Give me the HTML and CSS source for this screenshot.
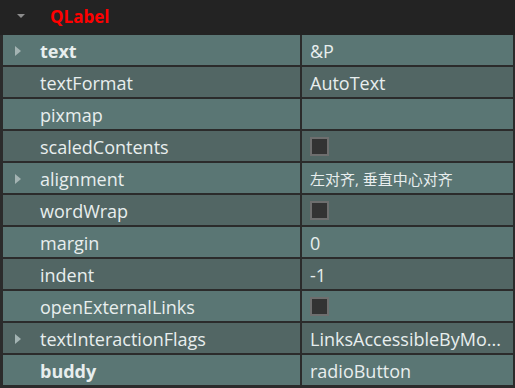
FILE: index.html
```html
<!DOCTYPE html>
<html>
<head>
<meta charset="utf-8">
<link rel="stylesheet" href="styles.css">
</head>
<body>
<div class="panel">
  <div class="header">
    <span class="tri-down"></span>
    <span class="title">QLabel</span>
  </div>
  <div class="rows">
    <div class="row light">
      <div class="name"><span class="arrow"></span><span class="bold">text</span></div>
      <div class="value">&amp;P</div>
    </div>
    <div class="row dark">
      <div class="name"><span class="noarrow"></span>textFormat</div>
      <div class="value">AutoText</div>
    </div>
    <div class="row light">
      <div class="name"><span class="noarrow"></span>pixmap</div>
      <div class="value"></div>
    </div>
    <div class="row dark">
      <div class="name"><span class="noarrow"></span>scaledContents</div>
      <div class="value"><span class="check"></span></div>
    </div>
    <div class="row light">
      <div class="name"><span class="arrow"></span>alignment</div>
      <div class="value cjk">左对齐, 垂直中心对齐</div>
    </div>
    <div class="row dark">
      <div class="name"><span class="noarrow"></span>wordWrap</div>
      <div class="value"><span class="check"></span></div>
    </div>
    <div class="row light">
      <div class="name"><span class="noarrow"></span>margin</div>
      <div class="value">0</div>
    </div>
    <div class="row dark">
      <div class="name"><span class="noarrow"></span>indent</div>
      <div class="value">-1</div>
    </div>
    <div class="row light">
      <div class="name"><span class="noarrow"></span>openExternalLinks</div>
      <div class="value"><span class="check"></span></div>
    </div>
    <div class="row dark">
      <div class="name"><span class="arrow"></span>textInteractionFlags</div>
      <div class="value">LinksAccessibleByMo...</div>
    </div>
    <div class="row light">
      <div class="name"><span class="noarrow"></span><span class="bold">buddy</span></div>
      <div class="value">radioButton</div>
    </div>
  </div>
</div>
</body>
</html>
```
FILE: styles.css
```css
html, body {
  margin: 0;
  padding: 0;
  background: #2b2b2b;
}
body {
  width: 515px;
  height: 388px;
  overflow: hidden;
  font-family: "Open Sans", "Noto Sans CJK SC", sans-serif;
  font-size: 18px;
  color: #e8eeee;
}
.panel {
  display: flex;
  flex-direction: column;
}
.header {
  height: 35px;
  background: #232323;
  display: flex;
  align-items: center;
}
.tri-down {
  width: 0;
  height: 0;
  margin-left: 17px;
  border-left: 4px solid transparent;
  border-right: 4px solid transparent;
  border-top: 4px solid #8c8c8c;
  margin-top: -3px;
}
.title {
  margin-left: 25px;
  color: #ff0000;
  font-weight: bold;
  font-size: 17px;
  margin-top: -3px;
}
.rows {
  display: flex;
  flex-direction: column;
  gap: 2px;
  padding: 0 2px 0 3px;
}
.row {
  height: 30px;
  display: grid;
  grid-template-columns: 297px 1fr;
  column-gap: 2px;
}
.row.light .name, .row.light .value { background: #5a7674; }
.row.dark .name, .row.dark .value { background: #526664; }
.name, .value {
  display: flex;
  align-items: center;
  white-space: nowrap;
  overflow: hidden;
  padding-top: 1px;
}
.name { padding-left: 12px; }
.value { padding-left: 8px; }
.value.cjk { font-size: 15px; }
.arrow {
  width: 0;
  height: 0;
  border-top: 5px solid transparent;
  border-bottom: 5px solid transparent;
  border-left: 6px solid #a4b4b3;
  margin-right: 19px;
}
.noarrow {
  width: 6px;
  margin-right: 19px;
}
.bold { font-weight: bold; }
.check {
  box-sizing: border-box;
  width: 19px;
  height: 19px;
  border: 2px solid #6e6e6e;
  background: #333333;
}
```
